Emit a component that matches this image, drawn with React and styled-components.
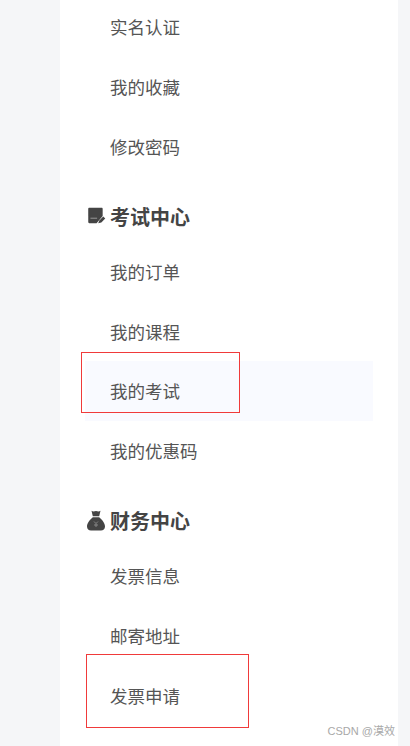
import React from "react";
import styled, { createGlobalStyle } from "styled-components";

const GlobalStyle = createGlobalStyle`
  html, body {
    margin: 0;
    height: 100%;
    overflow: hidden;
    background: #f5f6f8;
  }
  body {
    font-family: "Liberation Sans", "Noto Sans CJK SC", sans-serif;
  }
`;

const menu = [
  {
    items: ["实名认证", "我的收藏", "修改密码"],
  },
  {
    title: "考试中心",
    icon: "note",
    items: ["我的订单", "我的课程", "我的考试", "我的优惠码"],
    active: "我的考试",
  },
  {
    title: "财务中心",
    icon: "bag",
    items: ["发票信息", "邮寄地址", "发票申请"],
  },
];

const NoteIcon = () => (
  <svg width="20" height="20" viewBox="0 0 18 18">
    <path
      fill="#444"
      d="M2 2.500C2 2 2.500 1.500 3 1.500h11c.6 0 1 .4 1 1V9l-5.500 6.500H3c-.5 0-1-.5-1-1z"
    />
    <path fill="#444" d="M11 15.500l1-2.500 3.500-3.500 1.800 1.800-3.500 3.500z" />
    <path fill="#8f8f8f" d="M4 10.500h6v1H4z" />
  </svg>
);

const BagIcon = () => (
  <svg width="20" height="21" viewBox="0 0 20 21">
    <path
      fill="#444"
      d="M5.500 .8c1.300 1 2.800 .8 4.500 .2 1.700 .6 3.200 .8 4.500 -.2L13.200 6.200H6.800zM6.800 7.200h6.400c2.800 2.300 5.800 5.800 5.800 9.300 0 2.800 -1.800 4 -4 4H5c-2.200 0 -4 -1.200 -4 -4 0 -3.500 3 -7 5.800 -9.300z"
    />
    <path fill="none" stroke="#858585" strokeWidth="1" d="M8 11.500l2 2 2-2M10 13.500v3.500M8 15h4" />
  </svg>
);

const icons = { note: <NoteIcon />, bag: <BagIcon /> };

export default function App() {
  return (
    <Page>
      <GlobalStyle />
      <Panel>
        {menu.map((group, i) => (
          <div key={i}>
            {group.title && (
              <GroupTitle>
                <IconSlot>{icons[group.icon]}</IconSlot>
                {group.title}
              </GroupTitle>
            )}
            {group.items.map((item) => (
              <MenuItem key={item} $active={item === group.active}>
                {item}
              </MenuItem>
            ))}
          </div>
        ))}
      </Panel>
      <Mark $left={81} $top={352} $width={159} $height={61} />
      <Mark $left={86} $top={654} $width={163} $height={74} />
      <Watermark>CSDN @漠效</Watermark>
    </Page>
  );
}

const Page = styled.div`
  position: relative;
  width: 410px;
  height: 746px;
  overflow: hidden;
  background: #f5f6f8;
`;

const Panel = styled.div`
  width: 338px;
  height: 749px;
  margin: -2.8px 0 0 60px;
  padding: 0 25px;
  box-sizing: border-box;
  background: #fff;
`;

const GroupTitle = styled.div`
  display: flex;
  align-items: center;
  height: 65.6px;
  padding: 14px 0 0 1px;
  box-sizing: border-box;
  font-size: 20px;
  font-weight: 700;
  color: #444;
`;

const IconSlot = styled.span`
  display: flex;
  width: 24px;
`;

const MenuItem = styled.div`
  height: 59.7px;
  line-height: 62px;
  padding-left: 25px;
  font-size: 17.5px;
  color: #555;
  background: ${(p) => (p.$active ? "#f9faff" : "transparent")};
`;

const Mark = styled.div`
  position: absolute;
  left: ${(p) => p.$left}px;
  top: ${(p) => p.$top}px;
  width: ${(p) => p.$width}px;
  height: ${(p) => p.$height}px;
  box-sizing: border-box;
  border: 1px solid #f03a3a;
`;

const Watermark = styled.div`
  position: absolute;
  right: 15px;
  bottom: 8px;
  font-size: 11px;
  color: #a8a8a8;
`;
